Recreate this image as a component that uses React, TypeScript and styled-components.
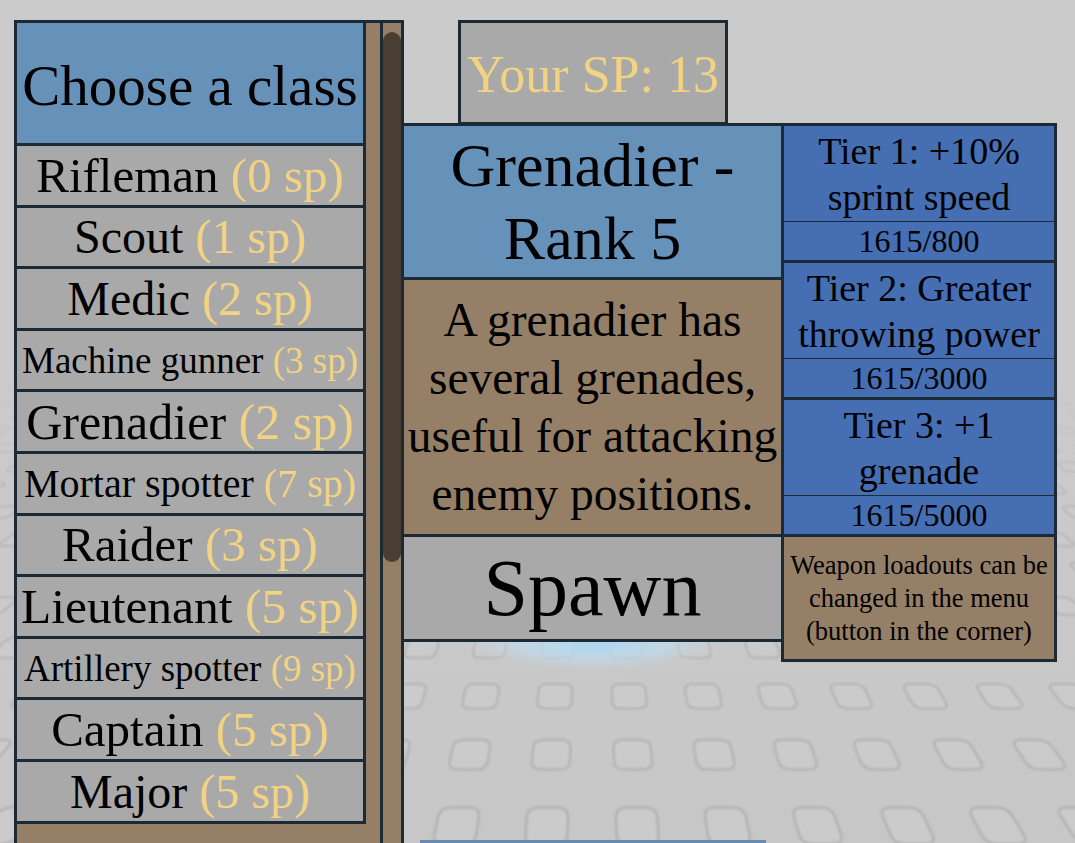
import React from 'react';
import { styled, createGlobalStyle } from 'styled-components';

const DARK = '#1c2a36';
const GREY = '#a9a9a9';
const BROWN = '#957f67';
const STEEL = '#6691b9';
const TIER_BLUE = '#466eb3';
const GOLD = '#f2d383';

const GlobalStyle = createGlobalStyle`
  html, body {
    margin: 0;
    width: 1075px;
    height: 843px;
    overflow: hidden;
    background: #c9c9c9;
  }
  #root {
    height: 100%;
  }
`;

type ClassEntry = { name: string; cost: number; size: number };

const classes: ClassEntry[] = [
  { name: 'Rifleman', cost: 0, size: 49 },
  { name: 'Scout', cost: 1, size: 48 },
  { name: 'Medic', cost: 2, size: 48 },
  { name: 'Machine gunner', cost: 3, size: 37 },
  { name: 'Grenadier', cost: 2, size: 50 },
  { name: 'Mortar spotter', cost: 7, size: 40 },
  { name: 'Raider', cost: 3, size: 49 },
  { name: 'Lieutenant', cost: 5, size: 49.5 },
  { name: 'Artillery spotter', cost: 9, size: 37 },
  { name: 'Captain', cost: 5, size: 49 },
  { name: 'Major', cost: 5, size: 48 },
];

const tiers = [
  { lines: ['Tier 1: +10%', 'sprint speed'], progress: '1615/800' },
  { lines: ['Tier 2: Greater', 'throwing power'], progress: '1615/3000' },
  { lines: ['Tier 3: +1', 'grenade'], progress: '1615/5000' },
];

// baseplate studs seen in perspective
const HORIZON = 99;
const VANISH_X = 592;

function project(x: number, n: number): [number, number] {
  const w = 0.001377 + 0.000149 * n;
  return [VANISH_X + (x * 0.124) / w, HORIZON + 1 / w];
}

function roundedQuad(pts: [number, number][], t: number) {
  let d = '';
  pts.forEach((p, i) => {
    const prev = pts[(i + pts.length - 1) % pts.length];
    const next = pts[(i + 1) % pts.length];
    const a = [p[0] + (prev[0] - p[0]) * t, p[1] + (prev[1] - p[1]) * t];
    const b = [p[0] + (next[0] - p[0]) * t, p[1] + (next[1] - p[1]) * t];
    d += `${i === 0 ? 'M' : 'L'}${a[0].toFixed(1)},${a[1].toFixed(1)} `;
    d += `Q${p[0].toFixed(1)},${p[1].toFixed(1)} ${b[0].toFixed(1)},${b[1].toFixed(1)} `;
  });
  return d + 'Z';
}

function Baseplate() {
  const studs: React.ReactNode[] = [];
  const h = 0.23;
  for (let n = -2; n <= 14; n++) {
    const [, cy] = project(0, n);
    const scale = 0.124 * (cy - HORIZON);
    for (let k = -30; k <= 30; k++) {
      const x = k - 0.5;
      const pts: [number, number][] = [
        project(x - h, n - h),
        project(x + h, n - h),
        project(x + h, n + h),
        project(x - h, n + h),
      ];
      if (pts[1][0] < -20 || pts[0][0] > 1095) continue;
      studs.push(
        <path
          key={`${n}-${k}`}
          d={roundedQuad(pts, 0.26)}
          fill="#cbcbcb"
          stroke="#b3b3b3"
          strokeWidth={Math.max(1, scale * 0.03)}
        />,
      );
    }
  }
  return (
    <Backdrop viewBox="0 0 1075 843" width={1075} height={843}>
      <defs>
        <linearGradient id="sky" x1="0" y1="0" x2="0" y2="843" gradientUnits="userSpaceOnUse">
          <stop offset="0" stopColor="#cdcdcd" />
          <stop offset="1" stopColor="#c7c7c7" />
        </linearGradient>
        <linearGradient id="fog" x1="0" y1="370" x2="0" y2="500" gradientUnits="userSpaceOnUse">
          <stop offset="0" stopColor="#cbcbcb" stopOpacity="1" />
          <stop offset="1" stopColor="#cbcbcb" stopOpacity="0" />
        </linearGradient>
        <radialGradient id="glow" cx="0.5" cy="0.5" r="0.5">
          <stop offset="0" stopColor="#a9d6f3" stopOpacity="1" />
          <stop offset="0.55" stopColor="#bfdff2" stopOpacity="0.6" />
          <stop offset="1" stopColor="#c9c9c9" stopOpacity="0" />
        </radialGradient>
        <filter id="soft">
          <feGaussianBlur stdDeviation="0.9" />
        </filter>
      </defs>
      <rect width="1075" height="843" fill="url(#sky)" />
      <g filter="url(#soft)">{studs}</g>
      <rect width="1075" height="500" fill="url(#fog)" />
      <ellipse cx="594" cy="642" rx="140" ry="32" fill="url(#glow)" />
    </Backdrop>
  );
}

export default function App() {
  return (
    <Stage>
      <GlobalStyle />
      <Baseplate />
      <Hud>
        <ClassFrame>
          <ClassList>
            <ListHeader>Choose a class</ListHeader>
            {classes.map(c => (
              <ClassRow key={c.name} $size={c.size}>
                {c.name} <Cost>({c.cost} sp)</Cost>
              </ClassRow>
            ))}
          </ClassList>
          <FrameGap />
          <ScrollTrack>
            <ScrollThumb />
          </ScrollTrack>
        </ClassFrame>

        <DetailArea>
          <PointsBox>Your SP: 13</PointsBox>
          <DetailGrid>
            <MainColumn>
              <Panel $bg={STEEL} $height={157}>
                <TitleText>
                  Grenadier -<br />
                  Rank 5
                </TitleText>
              </Panel>
              <Panel $bg={BROWN} $height={260}>
                <Description>
                  A grenadier has
                  <br />
                  several grenades,
                  <br />
                  useful for attacking
                  <br />
                  enemy positions.
                </Description>
              </Panel>
              <Panel $bg={GREY} $height={108}>
                <SpawnText>Spawn</SpawnText>
              </Panel>
            </MainColumn>
            <SideColumn>
              {tiers.map(t => (
                <TierBox key={t.progress}>
                  <TierText>
                    {t.lines[0]}
                    <br />
                    {t.lines[1]}
                  </TierText>
                  <TierProgress>{t.progress}</TierProgress>
                </TierBox>
              ))}
              <Panel $bg={BROWN} $height={128}>
                <NoteText>
                  Weapon loadouts can be
                  <br />
                  changed in the menu
                  <br />
                  (button in the corner)
                </NoteText>
              </Panel>
            </SideColumn>
          </DetailGrid>
        </DetailArea>
      </Hud>
      <Hotbar />
    </Stage>
  );
}

const Stage = styled.div`
  position: relative;
  width: 1075px;
  height: 843px;
  overflow: hidden;
  font-family: 'Liberation Serif', 'Times New Roman', serif;
  color: #000;
`;

const Backdrop = styled.svg`
  position: absolute;
  inset: 0;
  display: block;
`;

const Hud = styled.div`
  position: relative;
  z-index: 1;
  display: flex;
  align-items: flex-start;
  padding: 20px 0 0 14px;
`;

const ClassFrame = styled.div`
  width: 390px;
  height: 840px;
  box-sizing: border-box;
  border: 3px solid ${DARK};
  border-bottom: none;
  background: ${BROWN};
  display: flex;
`;

const ClassList = styled.div`
  width: 349px;
  display: flex;
  flex-direction: column;
`;

const ListHeader = styled.div`
  height: 123px;
  box-sizing: border-box;
  padding-top: 4px;
  background: ${STEEL};
  border-right: 3px solid ${DARK};
  border-bottom: 3px solid ${DARK};
  display: flex;
  align-items: center;
  justify-content: center;
  font-size: 57px;
  white-space: nowrap;
`;

const ClassRow = styled.div<{ $size: number }>`
  height: 61.6px;
  box-sizing: border-box;
  background: ${GREY};
  border-right: 3px solid ${DARK};
  border-bottom: 3px solid ${DARK};
  display: flex;
  align-items: center;
  justify-content: center;
  font-size: ${p => p.$size}px;
  white-space: pre;
`;

const Cost = styled.span`
  color: ${GOLD};
`;

const FrameGap = styled.div`
  width: 14px;
`;

const ScrollTrack = styled.div`
  width: 21px;
  box-sizing: border-box;
  border-left: 3px solid ${DARK};
  padding-top: 9px;
`;

const ScrollThumb = styled.div`
  height: 530px;
  background: #4a3e32;
  border-radius: 9px;
`;

const DetailArea = styled.div`
  margin-left: -3px;
  display: flex;
  flex-direction: column;
`;

const PointsBox = styled.div`
  margin-left: 57px;
  width: 270px;
  height: 105px;
  box-sizing: border-box;
  padding-top: 4px;
  border: 3px solid ${DARK};
  background: ${GREY};
  color: ${GOLD};
  font-size: 52px;
  display: flex;
  align-items: center;
  justify-content: center;
  white-space: nowrap;
`;

const DetailGrid = styled.div`
  margin-top: -2px;
  display: flex;
  align-items: flex-start;
`;

const MainColumn = styled.div`
  width: 383px;
  display: flex;
  flex-direction: column;
`;

const SideColumn = styled.div`
  width: 276px;
  margin-left: -3px;
  display: flex;
  flex-direction: column;
`;

const Panel = styled.div<{ $bg: string; $height: number }>`
  height: ${p => p.$height}px;
  box-sizing: border-box;
  border: 3px solid ${DARK};
  background: ${p => p.$bg};
  display: flex;
  align-items: center;
  justify-content: center;
  text-align: center;
  white-space: nowrap;

  & + & {
    margin-top: -3px;
  }
`;

const TitleText = styled.div`
  font-size: 62px;
  line-height: 73px;
`;

const Description = styled.div`
  font-size: 47.5px;
  line-height: 58px;
`;

const SpawnText = styled.div`
  font-size: 80px;
  line-height: 1;
`;

const NoteText = styled.div`
  font-size: 26.5px;
  line-height: 33px;
`;

const TierBox = styled.div`
  height: 140px;
  box-sizing: border-box;
  border: 3px solid ${DARK};
  background: ${TIER_BLUE};
  display: flex;
  flex-direction: column;
  text-align: center;
  white-space: nowrap;
  margin-bottom: -3px;
`;

const TierText = styled.div`
  height: 95px;
  display: flex;
  align-items: center;
  justify-content: center;
  font-size: 38px;
  line-height: 46px;
`;

const TierProgress = styled.div`
  height: 39px;
  box-sizing: border-box;
  border-top: 1px solid ${DARK};
  display: flex;
  align-items: center;
  justify-content: center;
  font-size: 32px;
`;

const Hotbar = styled.div`
  position: absolute;
  left: 420px;
  top: 840px;
  width: 346px;
  height: 6px;
  background: #6a8bb0;
`;
